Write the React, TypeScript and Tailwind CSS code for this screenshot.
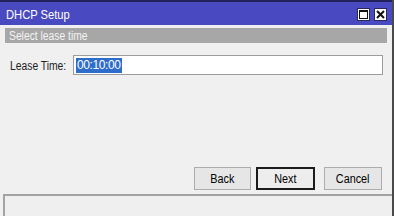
import React from 'react';

const font = { fontFamily: '"Liberation Sans", Arial, sans-serif' };

// reference text is drawn narrower than Arial; squeeze it horizontally
const Narrow: React.FC<{ children: React.ReactNode; className?: string }> = ({ children, className }) => (
  <span className={`inline-block origin-left scale-x-[0.86] whitespace-nowrap ${className ?? ''}`}>{children}</span>
);

const TitleButton: React.FC<{ kind: 'max' | 'close' }> = ({ kind }) => (
  <div className="w-[13px] h-[13px] bg-white border border-[#2a2a5a] flex items-center justify-center">
    {kind === 'max' ? (
      <svg width="9" height="9" viewBox="0 0 9 9">
        <rect x="0.5" y="0.5" width="8" height="8" fill="none" stroke="#111" strokeWidth="1" />
        <rect x="0" y="0" width="9" height="2" fill="#111" />
      </svg>
    ) : (
      <svg width="9" height="9" viewBox="0 0 9 9">
        <path d="M1 1 L8 8 M8 1 L1 8" stroke="#111" strokeWidth="2" />
      </svg>
    )}
  </div>
);

const Button: React.FC<{ label: string; primary?: boolean; width: string; className?: string }> = ({
  label,
  primary,
  width,
  className,
}) => (
  <button
    type="button"
    className={
      (primary
        ? `${width} h-[23px] bg-[#ededed] border-2 border-[#1c1c1c] text-[12px] text-black`
        : `${width} h-[23px] bg-[#e6e6e6] border border-[#adadad] text-[12px] text-black`) +
      ' flex items-center justify-center ' +
      (className ?? '')
    }
    style={font}
  >
    <span className="inline-block scale-x-[0.9] whitespace-nowrap">{label}</span>
  </button>
);

export default function App() {
  return (
    <div className="w-[394px] h-[216px] bg-[#f0f0f0] flex flex-col overflow-hidden border-r-2 border-[#4a4a4a]" style={font}>
      <div className="h-[25px] shrink-0 border-t-2 border-[#22225a] bg-[#4949c1] flex items-center pl-[6px] pr-[5px]">
        <Narrow className="text-white text-[13px] leading-none mt-[1px]">DHCP Setup</Narrow>
        <div className="ml-auto flex gap-[4px] mt-[2px]">
          <TitleButton kind="max" />
          <TitleButton kind="close" />
        </div>
      </div>

      <div className="flex-1 flex flex-col pt-[3px]">
        <div className="mx-[5px] h-[15px] bg-[#a7a7a7] flex items-center pl-[4px]">
          <Narrow className="text-[#f4f4f4] text-[12px] leading-none">Select lease time</Narrow>
        </div>

        <div className="flex items-center mt-[10px] pl-[10px] pr-[9px]">
          <div className="w-[63px] shrink-0">
            <Narrow className="text-[12px] text-[#222]">Lease Time:</Narrow>
          </div>
          <div className="flex-1 h-[20px] bg-white border border-[#9c9c9c] flex items-center pl-[2px]">
            <span className="bg-[#2f6dcb] text-white text-[12px] leading-[15px] px-[1px] tracking-[-0.4px] whitespace-nowrap">
              00:10:00
            </span>
          </div>
        </div>

        <div className="flex-1" />

        <div className="flex justify-end gap-[5px] pr-[10px] mb-[4px]">
          <Button label="Back" width="w-[57px]" />
          <Button label="Next" primary width="w-[59px]" />
          <Button label="Cancel" width="w-[58px]" className="ml-[4px]" />
        </div>

        <div className="h-[22px] ml-[3px] border-t-2 border-l-2 border-[#a3a3a3] bg-[#efefef]" />
      </div>
    </div>
  );
}
